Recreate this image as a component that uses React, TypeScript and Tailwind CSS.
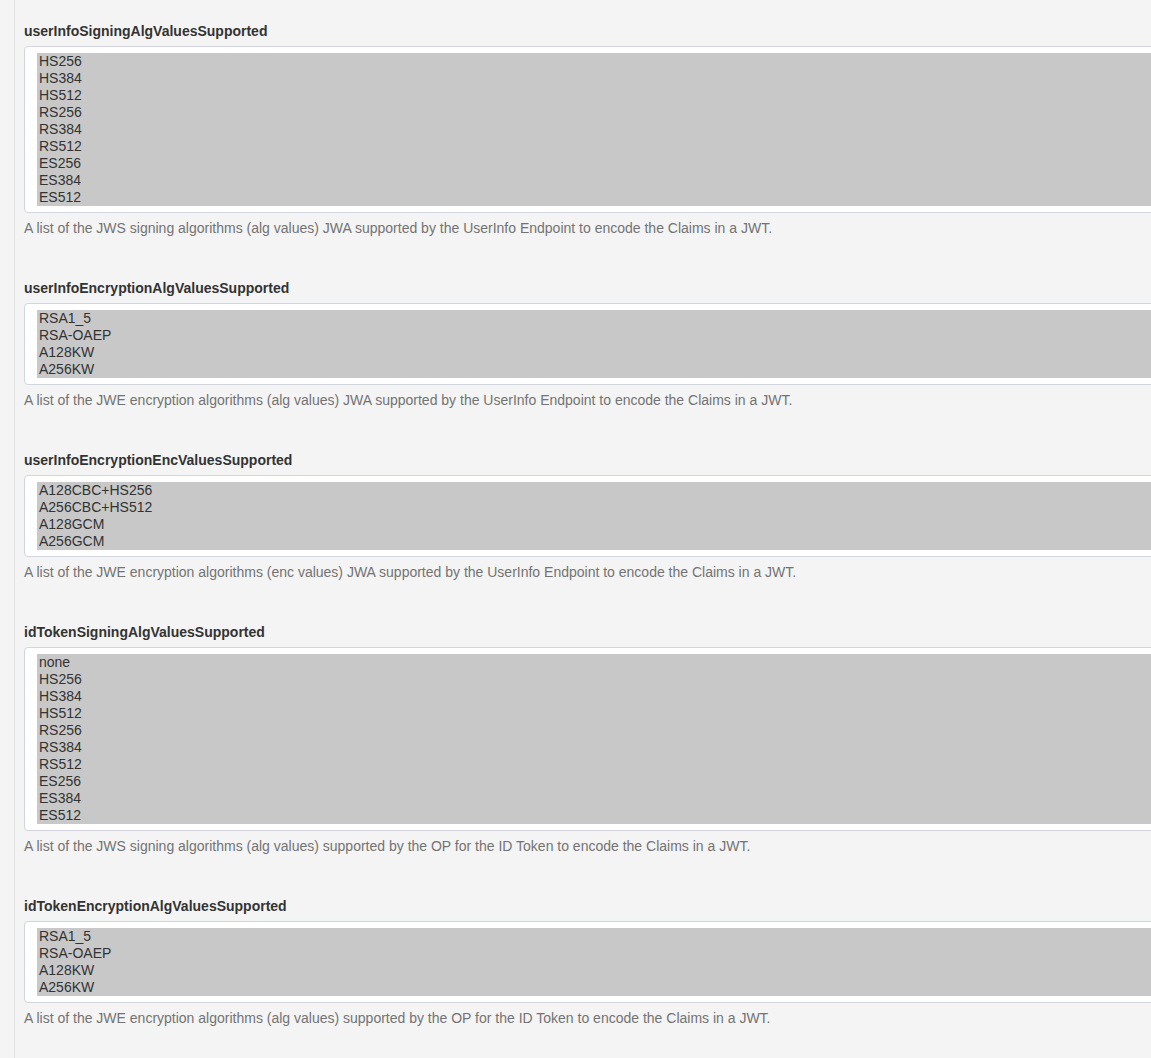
import React from 'react'

type Field = {
  name: string
  values: string[]
  help: string
}

const fields: Field[] = [
  {
    name: 'userInfoSigningAlgValuesSupported',
    values: ['HS256', 'HS384', 'HS512', 'RS256', 'RS384', 'RS512', 'ES256', 'ES384', 'ES512'],
    help: 'A list of the JWS signing algorithms (alg values) JWA supported by the UserInfo Endpoint to encode the Claims in a JWT.',
  },
  {
    name: 'userInfoEncryptionAlgValuesSupported',
    values: ['RSA1_5', 'RSA-OAEP', 'A128KW', 'A256KW'],
    help: 'A list of the JWE encryption algorithms (alg values) JWA supported by the UserInfo Endpoint to encode the Claims in a JWT.',
  },
  {
    name: 'userInfoEncryptionEncValuesSupported',
    values: ['A128CBC+HS256', 'A256CBC+HS512', 'A128GCM', 'A256GCM'],
    help: 'A list of the JWE encryption algorithms (enc values) JWA supported by the UserInfo Endpoint to encode the Claims in a JWT.',
  },
  {
    name: 'idTokenSigningAlgValuesSupported',
    values: ['none', 'HS256', 'HS384', 'HS512', 'RS256', 'RS384', 'RS512', 'ES256', 'ES384', 'ES512'],
    help: 'A list of the JWS signing algorithms (alg values) supported by the OP for the ID Token to encode the Claims in a JWT.',
  },
  {
    name: 'idTokenEncryptionAlgValuesSupported',
    values: ['RSA1_5', 'RSA-OAEP', 'A128KW', 'A256KW'],
    help: 'A list of the JWE encryption algorithms (alg values) supported by the OP for the ID Token to encode the Claims in a JWT.',
  },
]

function MultiSelect({ values }: { values: string[] }) {
  return (
    <div className="bg-white border border-[#cfd6de] rounded-[4px] pl-[12px] py-[6px]">
      {values.map((v) => (
        <div key={v} className="bg-[#c8c8c8] pl-[2px] h-[17px] leading-[17px] text-[14px] text-[#333333]">
          {v}
        </div>
      ))}
    </div>
  )
}

export default function App() {
  return (
    <div className="min-h-screen bg-[#f4f4f4] overflow-hidden font-['Liberation_Sans',Arial,sans-serif]">
      <div className="ml-[14px] border-l border-[#e3e3e3] min-h-screen pl-[9px] pt-[21px]">
        <div className="w-[1180px]">
          {fields.map((f) => (
            <div key={f.name} className="mb-[40px]">
              <label className="block text-[14px] leading-5 font-bold text-[#333333] mb-[5px]">{f.name}</label>
              <MultiSelect values={f.values} />
              <p className="mt-[5px] text-[14px] leading-5 text-[#737373]">{f.help}</p>
            </div>
          ))}
        </div>
      </div>
    </div>
  )
}
